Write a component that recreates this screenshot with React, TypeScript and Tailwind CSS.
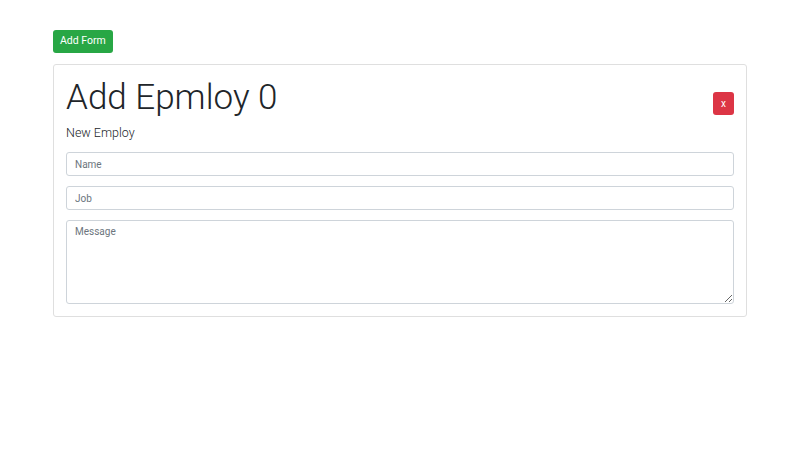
export default function App() {
  return (
    <div className="min-h-screen bg-white px-[53px] pt-[30px] font-['Roboto',sans-serif] text-[#212529]">
      <button className="block h-[23px] rounded-[3px] bg-[#28a745] px-[7px] text-[10.5px] leading-none text-white">
        Add Form
      </button>

      <div className="mt-[11px] rounded-[3px] border border-[#dfdfdf] p-[12px]">
        <div className="flex items-start justify-between">
          <h1 className="text-[35px] font-light leading-[42px]">Add Epmloy 0</h1>
          <button className="mt-[15px] h-[23px] w-[21px] rounded-[3px] bg-[#dc3545] text-[10px] leading-none text-white">
            x
          </button>
        </div>
        <p className="mt-[5px] text-[12.5px] font-light leading-[18px]">New Employ</p>

        <div className="mt-[10px] flex flex-col gap-[10px]">
          <input
            className="h-[24px] w-full rounded-[3px] border border-[#ced4da] px-[8px] text-[10px] outline-none placeholder:text-[#6c757d]"
            placeholder="Name"
          />
          <input
            className="h-[24px] w-full rounded-[3px] border border-[#ced4da] px-[8px] text-[10px] outline-none placeholder:text-[#6c757d]"
            placeholder="Job"
          />
          <textarea
            className="block h-[84px] w-full rounded-[3px] border border-[#ced4da] px-[8px] pt-[4px] text-[10px] leading-[14px] outline-none placeholder:text-[#6c757d]"
            placeholder="Message"
          />
        </div>
      </div>
    </div>
  )
}
